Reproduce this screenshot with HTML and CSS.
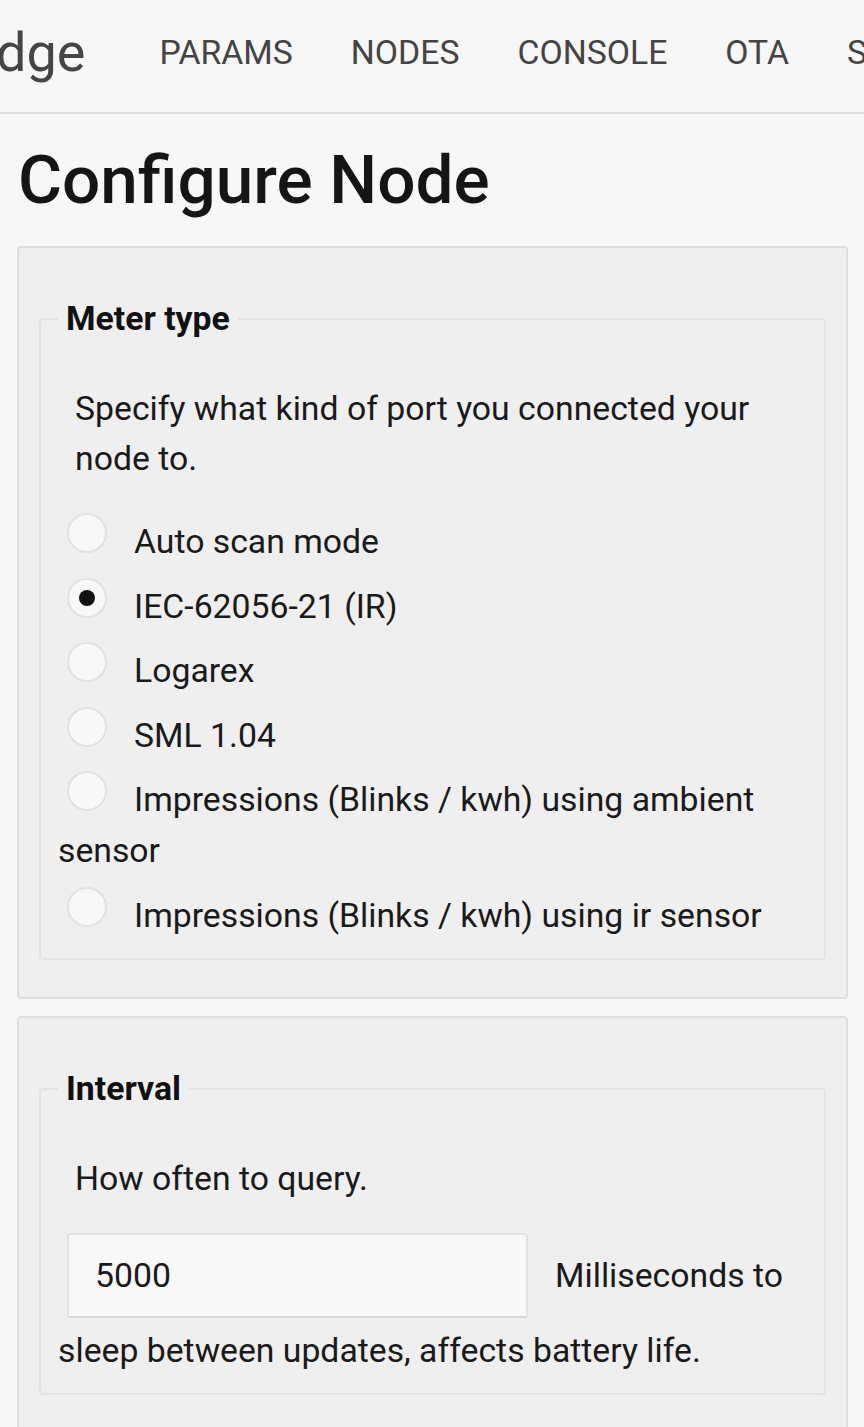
FILE: index.html
```html
<!DOCTYPE html>
<html lang="en">
<head>
<meta charset="utf-8">
<title>Configure Node</title>
<link rel="stylesheet" href="styles.css">
</head>
<body>
<header class="topbar">
  <span class="brand">dge</span>
  <nav class="nav">
    <a class="nav-link" href="#">PARAMS</a>
    <a class="nav-link" href="#">NODES</a>
    <a class="nav-link" href="#">CONSOLE</a>
    <a class="nav-link" href="#">OTA</a>
    <a class="nav-link" href="#">S</a>
  </nav>
</header>
<main class="main">
  <h1 class="title">Configure Node</h1>
  <form class="card">
    <fieldset class="group">
      <legend class="legend">Meter type</legend>
      <p class="hint">Specify what kind of port you connected your node to.</p>
      <div class="options">
        <label class="option"><input class="radio" type="radio" name="meter">Auto scan mode</label>
        <label class="option"><input class="radio" type="radio" name="meter" checked>IEC-62056-21 (IR)</label>
        <label class="option"><input class="radio" type="radio" name="meter">Logarex</label>
        <label class="option"><input class="radio" type="radio" name="meter">SML 1.04</label>
        <label class="option"><input class="radio" type="radio" name="meter">Impressions (Blinks / kwh) using ambient sensor</label>
        <label class="option"><input class="radio" type="radio" name="meter">Impressions (Blinks / kwh) using ir sensor</label>
      </div>
    </fieldset>
  </form>
  <form class="card">
    <fieldset class="group">
      <legend class="legend">Interval</legend>
      <p class="hint">How often to query.</p>
      <div class="field"><input class="text-input" type="text" value="5000">Milliseconds to sleep between updates, affects battery life.</div>
    </fieldset>
  </form>
</main>
</body>
</html>
```

FILE: styles.css
```css
html, body {
  margin: 0;
  padding: 0;
  background: #f7f7f7;
  overflow: hidden;
}
body {
  font-family: Roboto, "Noto Sans", "Liberation Sans", sans-serif;
  color: #1a1a1a;
  font-size: 33.75px;
  line-height: 50.625px;
}
.topbar {
  box-sizing: border-box;
  display: flex;
  align-items: center;
  height: 114px;
  padding-bottom: 8px;
  border-bottom: 2px solid #e0e0e0;
  white-space: nowrap;
  overflow: hidden;
  line-height: normal;
}
.brand {
  font-size: 54px;
  color: #454545;
  margin-left: -4px;
  margin-right: 74px;
}
.nav {
  display: flex;
  gap: 58px;
}
.nav-link {
  font-size: 33.75px;
  color: #444;
  text-decoration: none;
}
.main {
  padding: 0 16px 0 17px;
}
.title {
  font-size: 67.5px;
  font-weight: 500;
  line-height: 81px;
  margin: 25px 0 25.5px 1px;
  color: #151515;
}
.card {
  background: #efefef;
  border: 2px solid #dedede;
  border-radius: 4px;
  padding: 20px;
  margin: 0 0 17px;
}
.group {
  margin: 26px 0 17px;
  padding: 0 17px 16.5px;
  border: 2px solid #e3e3e3;
  border-radius: 4px;
}
.legend {
  font-weight: 700;
  padding: 0 8px;
  color: #111;
}
.hint {
  margin: 39.5px 0 18px;
  padding-left: 17px;
}
.option {
  display: block;
}
.radio {
  appearance: none;
  -webkit-appearance: none;
  display: inline-block;
  width: 40px;
  height: 40px;
  margin: 10px 27px 0 9px;
  border: 2px solid #e2e2e2;
  border-radius: 50%;
  background: #f8f8f8;
  vertical-align: baseline;
  box-sizing: border-box;
  position: relative;
}
.radio:checked::after {
  content: "";
  position: absolute;
  left: 10px;
  top: 10px;
  width: 16px;
  height: 16px;
  border-radius: 50%;
  background: #111;
}
.text-input {
  box-sizing: border-box;
  width: 461px;
  height: 85px;
  margin: 10px 27px 8px 9px;
  padding: 0 26px;
  font: inherit;
  color: #1a1a1a;
  background: #f8f8f8;
  border: 2px solid #e2e2e2;
  border-bottom-color: #d8d8d8;
  border-radius: 3px;
  vertical-align: baseline;
}
```
